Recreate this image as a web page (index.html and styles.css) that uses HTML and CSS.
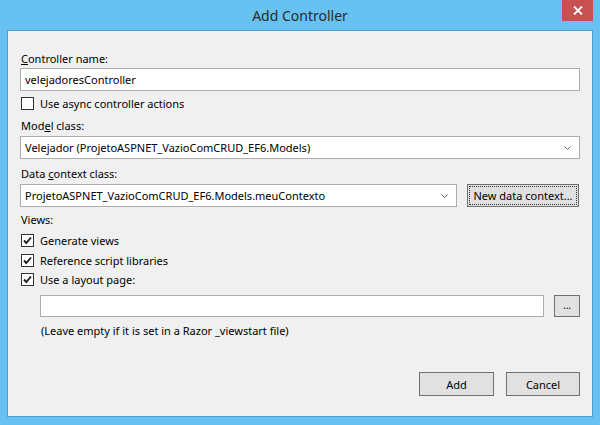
FILE: index.html
```html
<!DOCTYPE html>
<html>
<head>
<meta charset="utf-8">
<link rel="stylesheet" href="styles.css">
</head>
<body>
<div class="window">
  <div class="titlebar">
    <div class="title">Add Controller</div>
    <div class="close"><svg width="10" height="9" viewBox="0 0 10 9"><path d="M1 0.5 L9 8.5 M9 0.5 L1 8.5" stroke="#fff" stroke-width="1.8" fill="none"/></svg></div>
  </div>
  <div class="panel">
    <div class="lbl"><u>C</u>ontroller name:</div>
    <div class="textbox">velejadoresController</div>
    <div class="check first"><span class="box"></span><span>Use async controller actions</span></div>
    <div class="lbl model">Mod<u>e</u>l class:</div>
    <div class="combo"><span>Velejador (ProjetoASPNET_VazioComCRUD_EF6.Models)</span><svg class="arrow" width="7" height="4" viewBox="0 0 7 4"><path d="M0.5 0.5 L3.5 3.5 L6.5 0.5" stroke="#666" stroke-width="1" fill="none"/></svg></div>
    <div class="lbl data">Data <u>c</u>ontext class:</div>
    <div class="row">
      <div class="combo narrow"><span>ProjetoASPNET_VazioComCRUD_EF6.Models.meuContexto</span><svg class="arrow" width="7" height="4" viewBox="0 0 7 4"><path d="M0.5 0.5 L3.5 3.5 L6.5 0.5" stroke="#666" stroke-width="1" fill="none"/></svg></div>
      <div class="btn focus"><span class="focusring">New data context...</span></div>
    </div>
    <div class="lbl views">Views:</div>
    <div class="check"><span class="box checked"><svg width="11" height="11" viewBox="0 0 11 11"><path d="M2 5.5 L4.3 8 L9 2.5" stroke="#222" stroke-width="1.9" fill="none"/></svg></span><span>Generate views</span></div>
    <div class="check"><span class="box checked"><svg width="11" height="11" viewBox="0 0 11 11"><path d="M2 5.5 L4.3 8 L9 2.5" stroke="#222" stroke-width="1.9" fill="none"/></svg></span><span>Reference script libraries</span></div>
    <div class="check last"><span class="box checked"><svg width="11" height="11" viewBox="0 0 11 11"><path d="M2 5.5 L4.3 8 L9 2.5" stroke="#222" stroke-width="1.9" fill="none"/></svg></span><span>Use a layout page:</span></div>
    <div class="row layout">
      <div class="textbox grow"></div>
      <div class="btn small">...</div>
    </div>
    <div class="note">(Leave empty if it is set in a Razor _viewstart file)</div>
    <div class="actions">
      <div class="btn action add">Add</div>
      <div class="btn action">Cancel</div>
    </div>
  </div>
</div>
</body>
</html>
```

FILE: styles.css
```css
html, body {
  margin: 0;
  padding: 0;
}
body {
  width: 600px;
  height: 425px;
  overflow: hidden;
  font-family: "Noto Sans", "DejaVu Sans", sans-serif;
  font-size: 11px;
  color: #000;
}
.window {
  width: 600px;
  height: 425px;
  background: #67c1f1;
  display: flex;
  flex-direction: column;
  box-sizing: border-box;
}
.titlebar {
  height: 30px;
  position: relative;
  display: flex;
  align-items: center;
  justify-content: center;
}
.title {
  font-size: 14px;
  color: #2b2b2b;
  margin-top: 1px;
}
.close {
  position: absolute;
  top: 0;
  right: 7px;
  width: 31px;
  height: 21px;
  background: #c75050;
  display: flex;
  align-items: center;
  justify-content: center;
}
.close svg { display: block; }
.panel {
  flex: 1;
  margin: 0 7px 8px 7px;
  background: #f0f0f0;
  border: 1px solid #4c9fd2;
  padding: 20px 12px 0 12px;
  box-sizing: border-box;
}
.lbl {
  height: 16px;
  line-height: 16px;
  padding-left: 1px;
  margin-bottom: 1px;
}
.lbl.model { margin-top: 6px; margin-bottom: 2px; }
.lbl.data { margin-top: 7px; margin-bottom: 2px; }
.lbl.views { margin-top: 5px; margin-bottom: 2px; }
.textbox {
  height: 23px;
  box-sizing: border-box;
  border: 1px solid #abadb3;
  background: #fff;
  line-height: 21px;
  padding-left: 4px;
}
.check {
  height: 20px;
  display: flex;
  align-items: center;
  padding-left: 1px;
}
.check.first {
  margin-top: 3px;
  height: 18px;
}
.check.last { height: 19px; }
.box {
  width: 13px;
  height: 13px;
  box-sizing: border-box;
  border: 1px solid #333;
  background: #fff;
  margin-right: 6px;
  display: flex;
  align-items: center;
  justify-content: center;
}
.box svg { display: block; }
.combo {
  height: 23px;
  box-sizing: border-box;
  border: 1px solid #acacac;
  background: #fff;
  display: flex;
  align-items: center;
  justify-content: space-between;
  padding: 0 8px 0 4px;
  white-space: nowrap;
}
.combo .arrow { display: block; flex: none; }
.row {
  display: flex;
  gap: 10px;
}
.combo.narrow { width: 437px; }
.btn {
  box-sizing: border-box;
  border: 1px solid #adadad;
  background: #e1e1e1;
  display: flex;
  align-items: center;
  justify-content: center;
}
.btn.focus {
  width: 112px;
  height: 23px;
  border-color: #707070;
  padding: 1px;
}
.focusring {
  flex: 1;
  align-self: stretch;
  border: 1px dotted #333;
  display: flex;
  align-items: center;
  justify-content: center;
  white-space: nowrap;
}
.row.layout {
  margin-top: 6px;
  padding-left: 20px;
}
.textbox.grow {
  flex: 1;
  height: 22px;
}
.btn.small {
  width: 26px;
  height: 22px;
  border-color: #707070;
  font-size: 10px;
  padding-bottom: 3px;
}
.note {
  margin-top: 6px;
  padding-left: 21px;
  height: 16px;
  line-height: 16px;
}
.actions {
  margin-top: 33px;
  display: flex;
  justify-content: flex-end;
  gap: 12px;
}
.btn.action {
  width: 74px;
  height: 24px;
  border-color: #707070;
}
.btn.add { width: 75px; }
```
